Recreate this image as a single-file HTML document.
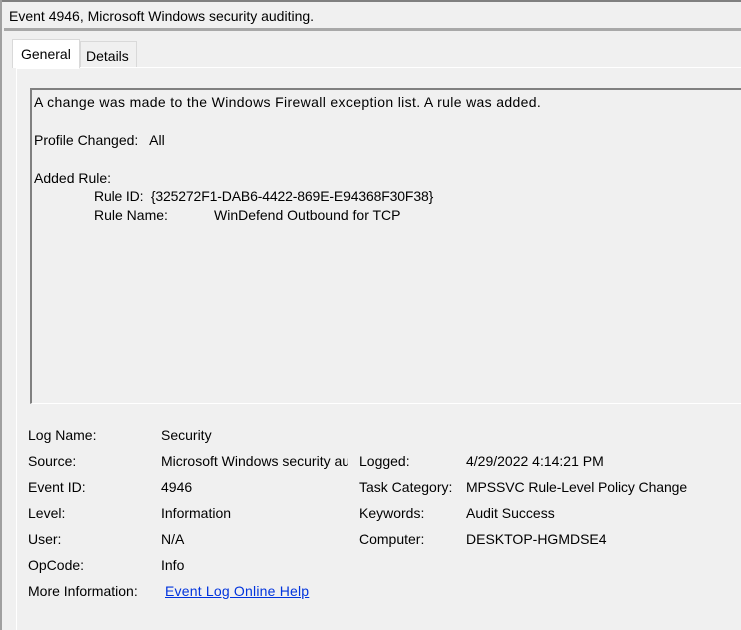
<!DOCTYPE html>
<html><head><meta charset="utf-8"><style>
*{margin:0;padding:0;box-sizing:border-box}
body{width:741px;height:630px;background:#f0f0f0;font-family:"Liberation Sans",sans-serif;font-size:14px;color:#000;position:relative;overflow:hidden}
.a{position:absolute;white-space:nowrap}
</style></head><body>
<div class="a" style="left:0;top:0;width:741px;height:2px;background:#808080"></div>
<div class="a" style="left:0;top:0;width:2px;height:630px;background:#a0a0a0"></div>
<div class="a" style="left:9px;top:8px;font-size:14px">Event 4946, Microsoft Windows security auditing.</div>
<div class="a" style="left:4px;top:28px;width:737px;height:3px;background:#a8a8a8"></div>
<div class="a" style="left:16px;top:67px;width:725px;height:563px;border-top:1px solid #fff;border-left:1px solid #fff"></div>
<div class="a" style="left:12px;top:39px;width:68px;height:29px;background:#fff;border:1px solid #d9d9d9;border-bottom:none"></div>
<div class="a" style="left:16px;top:67px;width:63px;height:2px;background:#fff"></div>
<div class="a" style="left:80px;top:41px;width:57px;height:26px;border:1px solid #d9d9d9;border-bottom:none"></div>
<div class="a" style="left:21px;top:46px">General</div>
<div class="a" style="left:86px;top:48px">Details</div>
<div class="a" style="left:30px;top:88px;width:711px;height:316px;border-top:2px solid #808080;border-left:2px solid #808080;border-bottom:1px solid #fff"></div>
<div class="a" style="left:34px;top:94px;letter-spacing:0.35px">A change was made to the Windows Firewall exception list. A rule was added.</div>
<div class="a" style="left:34px;top:132px">Profile Changed:&nbsp;&nbsp; All</div>
<div class="a" style="left:34px;top:170px">Added Rule:</div>
<div class="a" style="left:94px;top:188px;letter-spacing:-0.15px">Rule ID:&nbsp; {325272F1-DAB6-4422-869E-E94368F30F38}</div>
<div class="a" style="left:94px;top:207px">Rule Name:</div>
<div class="a" style="left:214px;top:207px">WinDefend Outbound for TCP</div>
<div class="a" style="left:28px;top:427px">Log Name:</div><div class="a" style="left:161px;top:427px">Security</div>
<div class="a" style="left:28px;top:453px">Source:</div><div class="a" style="left:161px;top:453px;width:187px;overflow:hidden">Microsoft Windows security auditing.</div>
<div class="a" style="left:359px;top:453px">Logged:</div><div class="a" style="left:466px;top:453px">4/29/2022 4:14:21 PM</div>
<div class="a" style="left:28px;top:479px">Event ID:</div><div class="a" style="left:161px;top:479px">4946</div>
<div class="a" style="left:359px;top:479px">Task Category:</div><div class="a" style="left:466px;top:479px;letter-spacing:-0.1px">MPSSVC Rule-Level Policy Change</div>
<div class="a" style="left:28px;top:505px">Level:</div><div class="a" style="left:161px;top:505px">Information</div>
<div class="a" style="left:359px;top:505px">Keywords:</div><div class="a" style="left:466px;top:505px">Audit Success</div>
<div class="a" style="left:28px;top:531px">User:</div><div class="a" style="left:161px;top:531px">N/A</div>
<div class="a" style="left:359px;top:531px">Computer:</div><div class="a" style="left:466px;top:531px">DESKTOP-HGMDSE4</div>
<div class="a" style="left:28px;top:557px">OpCode:</div><div class="a" style="left:161px;top:557px">Info</div>
<div class="a" style="left:28px;top:583px">More Information:</div><div class="a" style="left:165px;top:583px;color:#0033dd;text-decoration:underline;letter-spacing:0.2px">Event Log Online Help</div>
</body></html>
